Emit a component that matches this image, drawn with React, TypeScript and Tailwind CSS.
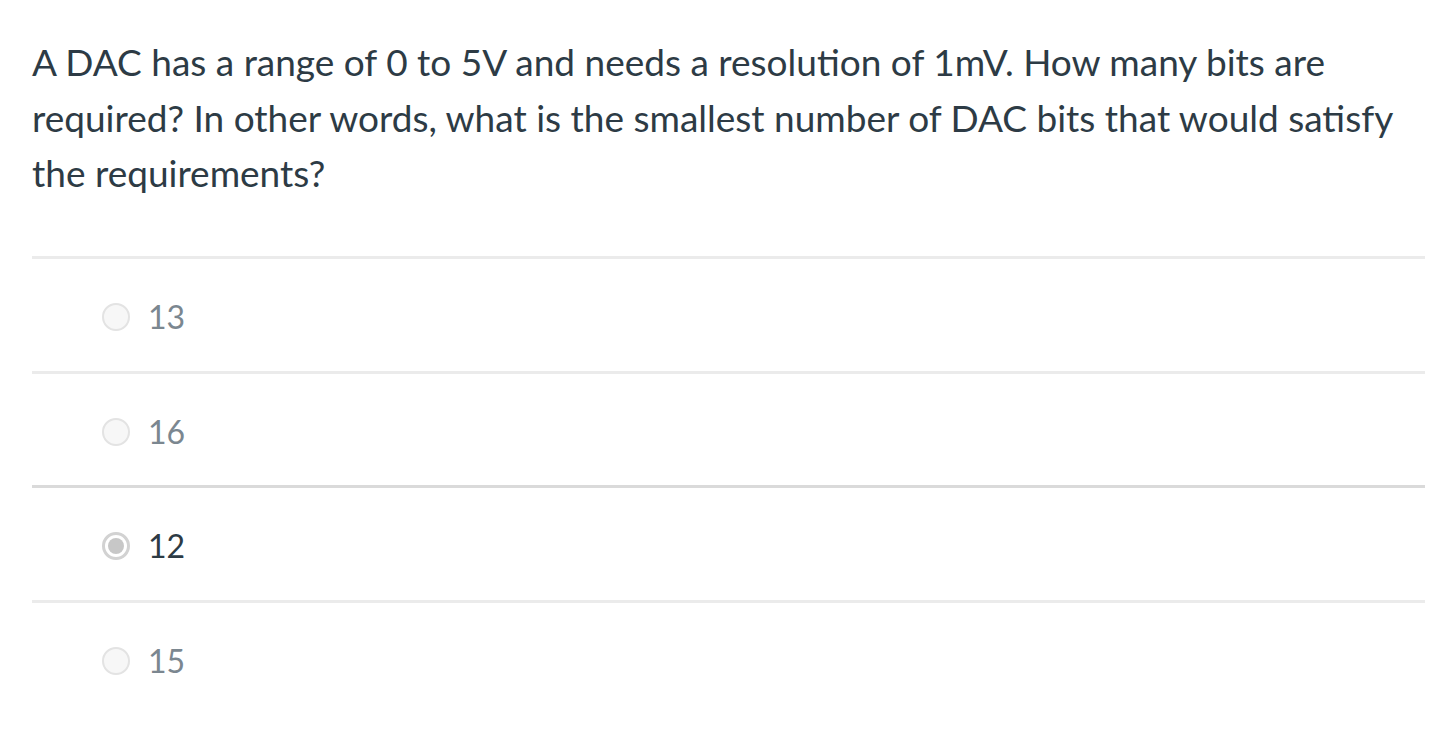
const answers = [
  { label: '13', selected: false },
  { label: '16', selected: false },
  { label: '12', selected: true },
  { label: '15', selected: false },
];

function Radio({ selected }: { selected: boolean }) {
  if (selected) {
    return (
      <span className="flex h-[28px] w-[28px] shrink-0 items-center justify-center rounded-full border-[3px] border-[#d2d2d2] bg-white">
        <span className="h-[16px] w-[16px] rounded-full bg-[#c7c7c7]" />
      </span>
    );
  }
  return <span className="h-[28px] w-[28px] shrink-0 rounded-full border-2 border-[#e3e3e3] bg-[#f7f7f7]" />;
}

export default function App() {
  return (
    <div className="min-h-screen bg-white pl-[32px] pr-[9px] pt-[34px] font-['Lato','Noto_Sans',sans-serif] text-[#2d3b45]">
      <p className="text-[37px] leading-[55.5px] pr-[20px]">
        A DAC has a range of 0 to 5V and needs a resolution of 1mV. How many bits are required? In other words, what
        is the smallest number of DAC bits that would satisfy the requirements?
      </p>

      <div className="mt-[55.5px]">
        {answers.map((a, i) => (
          <div
            key={a.label}
            className={`flex h-[114.5px] items-center border-t-[3px] pt-[5px] pl-[70px] ${
              i === 2 ? 'border-[#dadada]' : 'border-[#ebebeb]'
            }`}
          >
            <Radio selected={a.selected} />
            <span className={`ml-[18px] text-[32px] leading-none ${a.selected ? 'text-[#2d3b45]' : 'text-[#7b8790]'}`}>
              {a.label}
            </span>
          </div>
        ))}
      </div>
    </div>
  );
}
